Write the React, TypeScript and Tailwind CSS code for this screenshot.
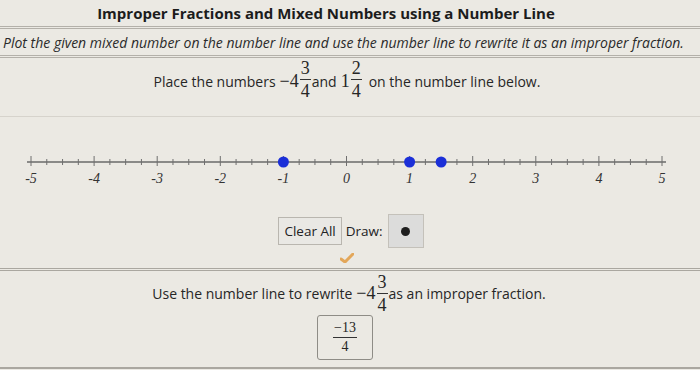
import React from 'react';

const serif = { fontFamily: '"Liberation Serif", "Times New Roman", serif' };

function Frac({ num, den, size = 'text-[18px]' }: { num: string; den: string; size?: string }) {
  return (
    <span className={`mx-[1px] inline-flex flex-col items-center align-middle leading-none ${size}`} style={serif}>
      <span className="px-[1px] pb-[2px]">{num}</span>
      <span className="h-[1px] w-full bg-[#333]" />
      <span className="px-[1px] pt-[2px]">{den}</span>
    </span>
  );
}

function NumberLine() {
  const x0 = 31;
  const unit = 63.1;
  const y = 163;
  const ticks = [];
  for (let i = 0; i <= 40; i++) {
    const x = x0 + (i * unit) / 4;
    const major = i % 4 === 0;
    ticks.push(
      <line key={i} x1={x} x2={x} y1={y - (major ? 6 : 3)} y2={y + (major ? 4 : 3)} stroke="#6f6f6f" strokeWidth={1} />
    );
  }
  const labels = [-5, -4, -3, -2, -1, 0, 1, 2, 3, 4, 5];
  const dots = [-1, 1, 1.5];
  return (
    <svg width={700} height={97} viewBox="0 118 700 97" className="block">
      <line x1={x0 - 4} x2={x0 + unit * 10 + 4} y1={y} y2={y} stroke="#6a6a6a" strokeWidth={1.5} />
      {ticks}
      {labels.map((n, i) => (
        <text
          key={n}
          x={x0 + i * unit}
          y={y + 21}
          textAnchor="middle"
          fontSize={14}
          fontStyle="italic"
          fill="#333"
          style={serif}
        >
          {n}
        </text>
      ))}
      {dots.map((d) => (
        <circle key={d} cx={x0 + (d + 5) * unit} cy={y} r={5.5} fill="#1b2fd8" />
      ))}
    </svg>
  );
}

export default function App() {
  return (
    <div
      className="h-[370px] w-[700px] overflow-hidden bg-[#ebe9e3] text-[#262626]"
      style={{ fontFamily: '"Open Sans", "Liberation Sans", sans-serif' }}
    >
      <div className="flex h-[29px] items-center justify-center border-b-[3px] border-double border-[#b3b0a9] pr-[48px] text-[15px] font-bold text-[#1c1c1c]">
        Improper Fractions and Mixed Numbers using a Number Line
      </div>
      <div className="flex h-[29px] items-center border-b-[3px] border-double border-[#b3b0a9] pl-[3px] text-[14px] italic text-[#2a2a2a]">
        Plot the given mixed number on the number line and use the number line to rewrite it as an improper fraction.
      </div>
      <div className="flex h-[59px] items-start justify-center border-b border-[#d6d3cc] pr-[6px] pt-[1px] text-[14px]">
        <span className="mt-[12px]">Place the numbers</span>
        <span className="ml-[4px] mt-[9px] text-[18px]" style={serif}>−4</span>
        <Frac num="3" den="4" />
        <span className="mt-[12px]">and</span>
        <span className="ml-[4px] mt-[9px] text-[18px]" style={serif}>1</span>
        <Frac num="2" den="4" />
        <span className="ml-[6px] mt-[12px]">on the number line below.</span>
      </div>
      <NumberLine />
      <div className="flex items-center justify-center gap-[4px] pl-[2px]">
        <button className="border border-[#b9b6af] bg-[#e9e8e4] px-[5px] py-[3px] text-[13.5px] text-[#222]">
          Clear All
        </button>
        <span className="text-[13.5px] text-[#222]">Draw:</span>
        <div className="ml-[1px] flex h-[34px] w-[36px] items-center justify-center border border-[#c4c1ba] bg-[#dcdcdb]">
          <span className="h-[9px] w-[9px] rounded-full bg-[#1e1e1e]" />
        </div>
      </div>
      <div className="flex h-[20px] items-center justify-center pr-[6px]">
        <svg width={14} height={10} viewBox="0 0 14 10">
          <path d="M1 6 L5 9 L13 1" stroke="#e3a75a" strokeWidth={3} fill="none" strokeLinecap="round" />
        </svg>
      </div>
      <div className="border-y border-[#aaa7a0] pt-[1px]" />
      <div className="flex h-[44px] items-center justify-center pr-[2px] text-[14px]">
        <span>Use the number line to rewrite</span>
        <span className="ml-[4px] text-[18px]" style={serif}>−4</span>
        <Frac num="3" den="4" />
        <span>as an improper fraction.</span>
      </div>
      <div className="flex justify-center pr-[10px]">
        <div className="flex h-[45px] w-[56px] items-center justify-center rounded-[3px] border border-[#8e8c86]">
          <Frac num="−13" den="4" size="text-[14px]" />
        </div>
      </div>
      <div className="mt-[7px] border-t-2 border-[#aaa7a0]" />
    </div>
  );
}
